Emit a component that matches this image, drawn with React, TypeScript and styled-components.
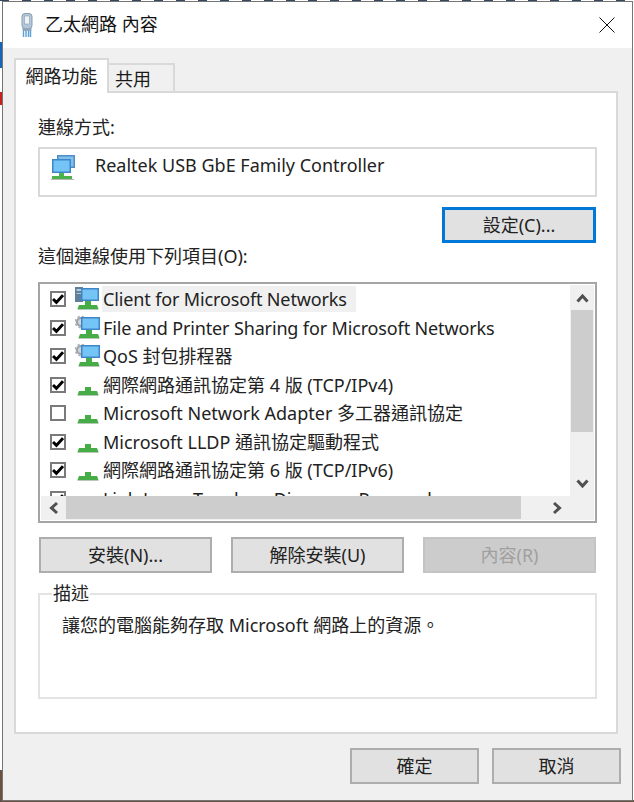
import React from "react";
import styled, { createGlobalStyle } from "styled-components";

const Global = createGlobalStyle`
  html, body {
    margin: 0; padding: 0; width: 634px; height: 802px; overflow: hidden;
    background-color: #fff;
    background-image:
      linear-gradient(#6b5240, #6b5240),
      linear-gradient(#6b5240, #6b5240),
      linear-gradient(#1565b8, #1565b8),
      linear-gradient(#c8201c, #c8201c),
      repeating-linear-gradient(90deg, #33475f 0 9px, #fff 9px 22px);
    background-repeat: no-repeat;
    background-size: 634px 2px, 2px 32px, 2px 26px, 2px 13px, 634px 1px;
    background-position: 0 800px, 0 770px, 0 42px, 0 92px, 0 0;
  }
  * { box-sizing: border-box; }
  #root { width: 634px; height: 802px; padding: 2px 2px 2px 3px; }
`;

const Window = styled.div`
  width: 629px; height: 798px; display: flex; flex-direction: column;
  background: #f0f0f0; outline: 1px solid #757575;
  font-family: "Noto Sans", "Noto Sans CJK TC", sans-serif; font-size: 18px; color: #1a1a1a;
`;
const TitleBar = styled.div`
  height: 46px; flex: none; background: #fff; display: flex; align-items: center; padding: 0 17px 0 17px;
`;
const TitleText = styled.span`
  margin-left: 11px; margin-bottom: 5px; font-size: 18px; color: #111; flex: 1;
`;
const Client = styled.div`
  flex: 1; display: flex; flex-direction: column; padding: 12px 11px 0;
`;
const TabRow = styled.div`
  display: flex; align-items: flex-end; height: 33px; flex: none; position: relative; z-index: 1; margin-bottom: -2px;
`;
const Tab = styled.div<{ $active?: boolean }>`
  height: ${p => (p.$active ? 35 : 30)}px; width: ${p => (p.$active ? 95 : 66)}px;
  background: ${p => (p.$active ? "#fff" : "#f0f0f0")};
  border: 2px solid #d9d9d9; border-bottom: ${p => (p.$active ? "none" : "2px solid #d9d9d9")};
  ${p => (p.$active ? "" : "border-left: none; padding-right: 16px;")}
  display: flex; align-items: center; justify-content: center; font-size: 18px;
  padding-bottom: ${p => (p.$active ? 3 : 1)}px;
`;
const Panel = styled.div`
  width: 604px; height: 643px; flex: none; background: #fff; border: 2px solid #d9d9d9;
  padding: 22px 19px 0 22px; display: flex; flex-direction: column;
`;
const Label = styled.div`
  height: 24px; line-height: 24px; font-size: 18px; color: #222;
`;
const AdapterBox = styled.div`
  margin-top: 8px; height: 50px; flex: none; border: 2px solid #d9d9d9; display: flex; align-items: flex-start; padding: 3px 0 0 11px;
`;
const AdapterGlyph = styled.div`
  margin-top: 2px; flex: none; height: 27px;
`;
const AdapterName = styled.span`
  margin-left: 19px; line-height: 26px; font-size: 18px; color: #222;
`;
const Button = styled.div<{ $w: number; $primary?: boolean; $disabled?: boolean }>`
  width: ${p => p.$w}px; height: 36px; flex: none; display: flex; align-items: center; justify-content: center;
  font-size: 18px; padding-bottom: 3px;
  background: ${p => (p.$disabled ? "#cccccc" : "#e1e1e1")};
  color: ${p => (p.$disabled ? "#a0a0a0" : "#222")};
  border: ${p => (p.$primary ? "3px solid #0078d7" : p.$disabled ? "2px solid #c4c4c4" : "2px solid #adadad")};
`;
const RightRow = styled.div`
  display: flex; justify-content: flex-end; margin-top: 10px; padding-right: 1px;
`;
const ListLabel = styled(Label)`
  margin-top: 1px;
`;
const ListBox = styled.div`
  margin-top: 14px; height: 241px; flex: none; border: 2px solid #a5a5a5; padding: 1px;
  display: grid; grid-template-columns: 1fr 24px; grid-template-rows: 211px 24px; background: #fff;
`;
const Rows = styled.div`
  overflow: hidden; padding: 0 0 0 9px;
`;
const Row = styled.div`
  height: 28.5px; display: flex; align-items: center; white-space: nowrap;
`;
const CheckBox = styled.div`
  width: 16px; height: 16px; flex: none; border: 2px solid #7a7a7a; background: #fff; display: flex; align-items: center; justify-content: center;
`;
const RowIcon = styled.div`
  width: 27px; margin-left: 9px; height: 26px; flex: none;
`;
const RowText = styled.span<{ $selected?: boolean; $latin?: boolean }>`
  margin-left: 0; padding: 0 9px 0 1px; height: 26px; line-height: 27px; font-size: 18px; color: #222;
  letter-spacing: ${p => (p.$latin ? "-0.14px" : "0")};
  background: ${p => (p.$selected ? "#f0f0f0" : "transparent")};
`;
const VScroll = styled.div`
  background: #f0f0f0; display: flex; flex-direction: column; align-items: stretch;
`;
const ArrowCell = styled.div<{ $w?: number; $h?: number }>`
  flex: none; display: flex; align-items: center; justify-content: center;
  ${p => (p.$w ? `width:${p.$w}px;` : "")} ${p => (p.$h ? `height:${p.$h}px;` : "")}
`;
const VThumb = styled.div`
  height: 122px; flex: none; background: #cdcdcd; margin: 0 1px;
`;
const Spacer = styled.div`
  flex: 1;
`;
const HScroll = styled.div`
  background: #f0f0f0; display: flex; align-items: stretch;
`;
const HThumb = styled.div`
  width: 455px; flex: none; background: #cdcdcd; margin: 0 0 1px;
`;
const Corner = styled.div`
  background: #f0f0f0;
`;
const ButtonRow = styled.div`
  display: flex; gap: 19px; margin-top: 14px; padding-left: 1px;
`;
const DescBox = styled.div`
  margin-top: 20px; height: 106px; flex: none; border: 2px solid #e3e3e3; position: relative; padding: 16px 0 0 22px;
  font-size: 18px; color: #222;
`;
const Legend = styled.span`
  position: absolute; left: 12px; top: -14px; background: #fff; padding: 0 1px; font-size: 18px; line-height: 24px; color: #222;
`;
const Footer = styled.div`
  display: flex; justify-content: flex-end; gap: 13px; margin-top: 14px;
`;

const Check = () => (
  <svg width="12" height="12" viewBox="0 0 12 12"><path d="M1 6 L4.4 9.4 L11 2.2" fill="none" stroke="#000" strokeWidth="3" /></svg>
);

const Usb = () => (
  <svg width="14" height="24" viewBox="0 0 14 24">
    <rect x="2" y="0.5" width="10" height="15" rx="3" fill="#b4c8dc" stroke="#8b9bab" />
    <rect x="4.5" y="3" width="5" height="8" fill="#eef3f8" stroke="#8b9bab" strokeWidth="0.6" />
    <rect x="2.5" y="15" width="9" height="3" fill="#8fa8c0" />
    <path d="M3.5 18v6M6 18v6M8.5 18v6M10.5 18v6" stroke="#5aa0d8" strokeWidth="1.4" />
  </svg>
);

const AdapterIcon = () => (
  <svg width="25" height="27" viewBox="0 0 25 27">
    <rect x="6" y="1" width="18" height="13" fill="#4f8fc8" />
    <rect x="7.5" y="2.5" width="15" height="10" fill="#7fc0ee" />
    <rect x="1" y="5" width="19" height="14" fill="#3f86c8" />
    <rect x="2.5" y="6.5" width="16" height="11" fill="#74c4f6" />
    <rect x="8" y="19" width="5" height="3" fill="#4cb24c" />
    <rect x="1" y="22" width="20" height="3" fill="#4cb24c" />
    <rect x="0" y="25" width="23" height="1" fill="#b9b9b9" />
  </svg>
);

const Pipe = ({ dx = 0 }: { dx?: number }) => (
  <g transform={`translate(${dx} 0)`}>
    <path d="M9 15h6v4h6l1.5 4h-21L3 19h6z" fill="#46ad46" />
    <rect x="1.5" y="23" width="21" height="1" fill="#b8c8b8" />
  </g>
);

const PipeIcon = () => (
  <svg width="27" height="26" viewBox="0 0 27 26"><Pipe dx={1} /></svg>
);

const ClientIcon = () => (
  <svg width="27" height="26" viewBox="0 0 27 26">
    <rect x="0" y="1" width="8" height="15" fill="#5f7f9c" />
    <rect x="1.5" y="3" width="5" height="2" fill="#b8c8d6" />
    <rect x="1.5" y="7" width="5" height="1" fill="#b8c8d6" />
    <rect x="6" y="2" width="18" height="13" fill="#3f86c8" />
    <rect x="7.5" y="3.5" width="15" height="10" fill="#74c4f6" />
    <Pipe dx={1} />
  </svg>
);

const ServiceIcon = () => (
  <svg width="27" height="26" viewBox="0 0 27 26">
    <circle cx="6" cy="7" r="4" fill="#d2d5d8" stroke="#9aa0a6" strokeWidth="2" />
    <circle cx="6" cy="7" r="5.6" fill="none" stroke="#aab0b6" strokeWidth="1.6" strokeDasharray="2.4 2" />
    <rect x="6" y="2" width="19" height="13" fill="#3f86c8" />
    <rect x="7.5" y="3.5" width="16" height="10" fill="#74c4f6" />
    <Pipe dx={2} />
  </svg>
);

const Chevron = ({ dir }: { dir: "up" | "down" | "left" | "right" }) => {
  const rot = { up: 0, down: 180, left: 270, right: 90 }[dir];
  return (
    <svg width="13" height="12" viewBox="0 0 13 12" style={{ transform: `rotate(${rot}deg)` }}>
      <path d="M1.5 9.5 L6.5 4 L11.5 9.5" fill="none" stroke="#505050" strokeWidth="3" />
    </svg>
  );
};

const items: { checked: boolean; icon: React.ReactNode; text: string; selected?: boolean; latin?: boolean }[] = [
  { checked: true, icon: <ClientIcon />, text: "Client for Microsoft Networks", selected: true, latin: true },
  { checked: true, icon: <ServiceIcon />, text: "File and Printer Sharing for Microsoft Networks", latin: true },
  { checked: true, icon: <ServiceIcon />, text: "QoS 封包排程器" },
  { checked: true, icon: <PipeIcon />, text: "網際網路通訊協定第 4 版 (TCP/IPv4)" },
  { checked: false, icon: <PipeIcon />, text: "Microsoft Network Adapter 多工器通訊協定" },
  { checked: true, icon: <PipeIcon />, text: "Microsoft LLDP 通訊協定驅動程式" },
  { checked: true, icon: <PipeIcon />, text: "網際網路通訊協定第 6 版 (TCP/IPv6)" },
  { checked: true, icon: <PipeIcon />, text: "Link-Layer Topology Discovery Responder", latin: true },
];

export default function App() {
  return (
    <>
      <Global />
      <Window>
        <TitleBar>
          <Usb />
          <TitleText>乙太網路 內容</TitleText>
          <svg width="16" height="16" viewBox="0 0 16 16"><path d="M0.5 0.5 L15.5 15.5 M15.5 0.5 L0.5 15.5" stroke="#111" strokeWidth="1" /></svg>
        </TitleBar>
        <Client>
          <TabRow>
            <Tab $active>網路功能</Tab>
            <Tab>共用</Tab>
          </TabRow>
          <Panel>
            <Label>連線方式:</Label>
            <AdapterBox>
              <AdapterGlyph><AdapterIcon /></AdapterGlyph>
              <AdapterName>Realtek USB GbE Family Controller</AdapterName>
            </AdapterBox>
            <RightRow><Button $w={154} $primary>設定(C)...</Button></RightRow>
            <ListLabel>這個連線使用下列項目(O):</ListLabel>
            <ListBox>
              <Rows>
                {items.map(it => (
                  <Row key={it.text}>
                    <CheckBox>{it.checked && <Check />}</CheckBox>
                    <RowIcon>{it.icon}</RowIcon>
                    <RowText $selected={it.selected} $latin={it.latin}>{it.text}</RowText>
                  </Row>
                ))}
              </Rows>
              <VScroll>
                <ArrowCell $h={25}><Chevron dir="up" /></ArrowCell>
                <VThumb />
                <Spacer />
                <ArrowCell $h={25}><Chevron dir="down" /></ArrowCell>
              </VScroll>
              <HScroll>
                <ArrowCell $w={25}><Chevron dir="left" /></ArrowCell>
                <HThumb />
                <Spacer />
                <ArrowCell $w={26}><Chevron dir="right" /></ArrowCell>
              </HScroll>
              <Corner />
            </ListBox>
            <ButtonRow>
              <Button $w={173}>安裝(N)...</Button>
              <Button $w={173}>解除安裝(U)</Button>
              <Button $w={173} $disabled>內容(R)</Button>
            </ButtonRow>
            <DescBox>
              <Legend>描述</Legend>
              讓您的電腦能夠存取 Microsoft 網路上的資源。
            </DescBox>
          </Panel>
          <Footer>
            <Button $w={129}>確定</Button>
            <Button $w={129}>取消</Button>
          </Footer>
        </Client>
      </Window>
    </>
  );
}
